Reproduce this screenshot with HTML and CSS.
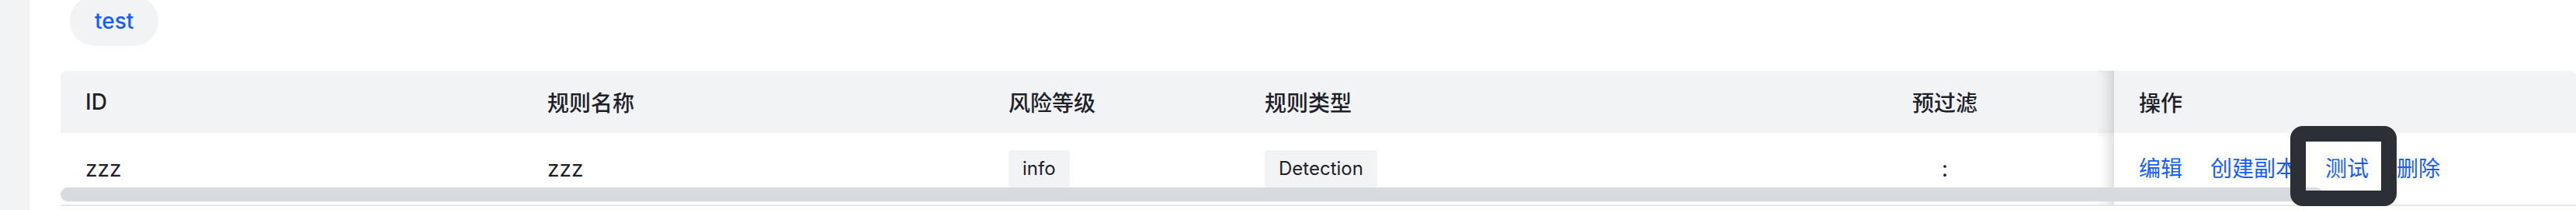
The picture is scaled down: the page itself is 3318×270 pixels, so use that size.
FILE: index.html
```html
<!DOCTYPE html>
<html lang="zh-CN">
<head>
  <meta charset="UTF-8">
  <meta name="viewport" content="width=device-width, initial-scale=1.0">
  <title>规则列表</title>
  <link rel="stylesheet" href="styles.css">
</head>
<body>

  <!-- Sidebar edge -->
  <aside class="side"></aside>

  <main class="content">
    <!-- Group tabs -->
    <div class="groups">
      <span class="group-pill">test</span>
    </div>

    <!-- Rules table -->
    <div class="table-wrap">
      <table class="rules">
        <colgroup>
          <col style="width: 595px">
          <col style="width: 594px">
          <col style="width: 330px">
          <col style="width: 690px">
          <col style="width: 436px">
          <col>
        </colgroup>
        <thead>
          <tr>
            <th>ID</th>
            <th>规则名称</th>
            <th>风险等级</th>
            <th>规则类型</th>
            <th class="center">预过滤</th>
            <th class="fixed">操作</th>
          </tr>
        </thead>
        <tbody>
          <tr>
            <td>zzz</td>
            <td>zzz</td>
            <td><span class="tag">info</span></td>
            <td><span class="tag">Detection</span></td>
            <td class="center">:</td>
            <td class="fixed">
              <div class="actions">
                <a href="#">编辑</a>
                <a href="#">创建副本</a>
                <a href="#" class="marked">测试</a>
                <a href="#">删除</a>
              </div>
            </td>
          </tr>
        </tbody>
      </table>
      <div class="scroll-thumb"></div>
    </div>
  </main>

</body>
</html>
```

FILE: styles.css
```css
* {
  margin: 0;
  padding: 0;
  box-sizing: border-box;
}
body {
  font-family: "Inter", "Noto Sans CJK SC", sans-serif;
  color: #1d2129;
  background-color: #fff;
  display: flex;
  height: 270px;
  overflow: hidden;
}
.side {
  width: 38px;
  flex-shrink: 0;
  background-color: #f2f3f5;
}
.content {
  flex: 1;
  padding-left: 40px;
}
.groups {
  display: flex;
  margin-top: -5px;
  padding-left: 12px;
}
.group-pill {
  height: 64px;
  line-height: 64px;
  padding: 0 32px;
  border-radius: 32px;
  background-color: #f2f3f5;
  color: #165dff;
  font-size: 28px;
  font-weight: 500;
}
.table-wrap {
  position: relative;
  margin-top: 32px;
}
.rules {
  width: 100%;
  table-layout: fixed;
  border-collapse: separate;
  border-spacing: 0;
  font-size: 28px;
}
.rules th {
  height: 80px;
  padding: 0 32px;
  background-color: #f2f3f5;
  text-align: left;
  font-weight: 500;
}
.rules th:first-child {
  border-top-left-radius: 8px;
}
.rules th:last-child {
  border-top-right-radius: 8px;
}
.rules td {
  height: 94px;
  padding: 0 32px;
  border-bottom: 2px solid #e5e6eb;
  background-color: #fff;
}
.rules .center {
  text-align: center;
}
.rules .fixed {
  position: relative;
}
.rules .fixed::before {
  content: '';
  position: absolute;
  top: 0;
  bottom: 0;
  left: -20px;
  width: 20px;
  box-shadow: inset -12px 0 16px -6px rgba(0, 0, 0, 0.15);
}
.tag {
  display: inline-block;
  height: 48px;
  line-height: 48px;
  padding: 0 18px;
  border-radius: 4px;
  background-color: #f2f3f5;
  font-size: 24px;
}
.actions {
  display: flex;
  gap: 36px;
}
.actions a {
  color: #165dff;
  text-decoration: none;
  line-height: 40px;
}
.actions .marked {
  position: relative;
}
.actions .marked::after {
  content: '';
  position: absolute;
  left: -45px;
  right: -36px;
  top: -35px;
  bottom: -28px;
  border: 20px solid #2b2f36;
  border-radius: 16px;
  z-index: 3;
}
.scroll-thumb {
  position: absolute;
  left: 0;
  bottom: 6px;
  width: 2914px;
  height: 18px;
  border-radius: 9px;
  background-color: #d7dadf;
  z-index: 2;
}
```
